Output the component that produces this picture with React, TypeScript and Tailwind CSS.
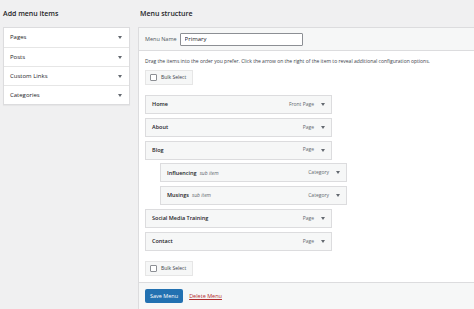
import { useState } from 'react'

interface MenuItem {
  title: string
  type: string
  sub?: boolean
}

const items: MenuItem[] = [
  { title: 'Home', type: 'Front Page' },
  { title: 'About', type: 'Page' },
  { title: 'Blog', type: 'Page' },
  { title: 'Influencing', type: 'Category', sub: true },
  { title: 'Musings', type: 'Category', sub: true },
  { title: 'Social Media Training', type: 'Page' },
  { title: 'Contact', type: 'Page' },
]

const sources = ['Pages', 'Posts', 'Custom Links', 'Categories']

function Caret() {
  return (
    <svg width="4" height="3" viewBox="0 0 4 3" className="shrink-0">
      <path d="M0 0h4L2 3z" fill="#646970" />
    </svg>
  )
}

function BulkSelect() {
  return (
    <div className="flex items-center gap-[4px] w-[48px] h-[15px] border border-[#e6e6e6] bg-[#f6f7f7] px-[4px]">
      <span className="w-[7px] h-[7px] border border-[#8c8f94] rounded-[1px] bg-white" />
      <span className="text-[5px] text-[#3c434a]">Bulk Select</span>
    </div>
  )
}

export default function App() {
  const [name, setName] = useState('Primary')

  return (
    <div
      className="w-[474px] h-[309px] bg-[#f0f0f1] flex overflow-hidden text-[#1d2327]"
      style={{ fontFamily: '"Open Sans", "Liberation Sans", sans-serif' }}
    >
      {/* left column */}
      <div className="w-[138px] shrink-0 px-[3px]">
        <h2 className="h-[27px] pt-[8px] text-[7px] font-semibold leading-[12px]">Add menu items</h2>
        <div className="w-[127px] bg-white border border-[#dcdcde] shadow-[0_1px_1px_rgba(0,0,0,0.04)]">
          {sources.map((s, i) => (
            <div
              key={s}
              className={`h-[19px] flex items-center justify-between pl-[6px] pr-[7px] ${i > 0 ? 'border-t border-[#e6e6e6]' : ''}`}
            >
              <span className="text-[6px]">{s}</span>
              <Caret />
            </div>
          ))}
        </div>
      </div>

      {/* right column */}
      <div className="flex-1 flex flex-col">
        <h2 className="h-[27px] pt-[8px] pl-[2px] text-[7px] font-semibold leading-[12px]">Menu structure</h2>
        <div className="flex-1 flex flex-col bg-white border-l border-t border-[#dcdcde]">
          <div className="h-[23px] shrink-0 flex items-center gap-[3px] px-[6px] bg-[#f6f7f7] border-b border-[#dcdcde]">
            <span className="text-[5.5px] text-[#50575e]">Menu Name</span>
            <input
              value={name}
              onChange={(e: React.ChangeEvent<HTMLInputElement>) => setName(e.target.value)}
              className="w-[123px] h-[13px] border border-[#8c8f94] rounded-[1px] bg-white px-[4px] text-[6px] outline-none"
            />
          </div>

          <div className="flex-1 px-[6px] pt-[7px]">
            <p className="text-[5px] text-[#3c434a] leading-[7px]">
              Drag the items into the order you prefer. Click the arrow on the right of the item to reveal additional configuration options.
            </p>
            <div className="mt-[5px]">
              <BulkSelect />
            </div>

            <div className="mt-[10px] flex flex-col gap-[3.8px]">
              {items.map((it) => (
                <div
                  key={it.title}
                  className={`w-[187px] h-[19px] flex items-center justify-between pl-[6px] pr-[6px] bg-[#f6f7f7] border border-[#dcdcde] ${it.sub ? 'ml-[15px]' : ''}`}
                >
                  <span className="text-[5.5px] font-semibold">
                    {it.title}
                    {it.sub && <span className="ml-[3px] font-normal italic text-[5px] text-[#646970]">sub item</span>}
                  </span>
                  <span className="flex items-center gap-[7px]">
                    <span className="text-[5px] text-[#646970]">{it.type}</span>
                    <Caret />
                  </span>
                </div>
              ))}
            </div>

            <div className="mt-[10px]">
              <BulkSelect />
            </div>
          </div>

          <div className="h-[27px] shrink-0 flex items-center gap-[6px] px-[6px] bg-[#f6f7f7] border-t border-[#dcdcde]">
            <button className="h-[14px] px-[5px] bg-[#2271b1] rounded-[2px] text-white text-[5.5px]">Save Menu</button>
            <a className="text-[5.5px] text-[#b32d2e] underline">Delete Menu</a>
          </div>
        </div>
      </div>
    </div>
  )
}
